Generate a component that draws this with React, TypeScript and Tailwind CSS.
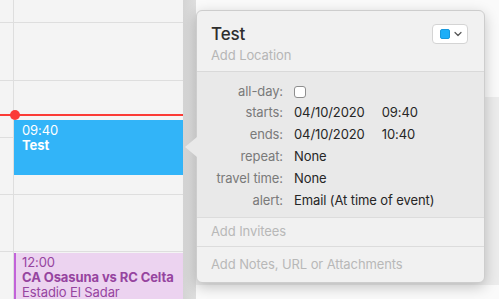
import React from 'react';

const font = { fontFamily: 'Inter, "Noto Sans", sans-serif' };

function DetailRow({ label, children, tall }: { label: string; children: React.ReactNode; tall?: boolean }) {
  return (
    <div className={`flex items-center ${tall ? 'h-[20px]' : 'h-[22px]'}`}>
      <div className="w-[86px] text-right text-[13px] text-[#7a7a7a] shrink-0">{label}</div>
      <div className="pl-[11px] text-[13px] text-[#262626] flex items-center">{children}</div>
    </div>
  );
}

function CalendarColumn() {
  return (
    <div className="relative w-[183px] h-full bg-[#f4f4f4] shrink-0">
      {/* hour grid */}
      <div className="flex flex-col">
        <div className="h-[22px]" />
        <div className="h-[58px] border-t border-[#dedede]" />
        <div className="h-[57px] border-t border-[#dedede]" />
        <div className="h-[57px] border-t border-[#dedede]" />
        <div className="h-[57px] border-t border-[#dedede]" />
        <div className="h-[48px] border-t border-[#dedede]" />
      </div>
      <div className="absolute left-[13px] top-0 bottom-0 w-px bg-[#dedede]" />

      {/* current time */}
      <div className="absolute left-0 right-0 top-[114px] h-[2px] bg-[#fb3b36]" />
      <div className="absolute left-[10px] top-[110px] w-[10px] h-[10px] rounded-full bg-[#fb3b36]" />

      {/* events */}
      <div className="absolute left-[14px] right-0 top-[120px] h-[55px] bg-[#32b4f8] pl-[8px] pt-[3px] text-white text-[13px] leading-[15px] tracking-[-0.1px]">
        <div>09:40</div>
        <div className="font-bold">Test</div>
      </div>
      <div className="absolute left-[14px] right-0 top-[253px] h-[60px] bg-[#ecd3f0] border-l-2 border-[#c262d9] pl-[6px] pt-[2px] text-[#96449f] text-[13px] leading-[15px] tracking-[-0.1px]">
        <div>12:00</div>
        <div className="font-bold">CA Osasuna vs RC Celta</div>
        <div>Estadio El Sadar</div>
      </div>
    </div>
  );
}

function EventPopover() {
  return (
    <div className="absolute left-0 top-[10px] w-[289px] h-[273px] rounded-[6px] border border-[#cdcdcd] bg-[#f1f1f1] shadow-[0_4px_14px_rgba(0,0,0,0.22)] flex flex-col tracking-[-0.1px]">
      {/* arrow */}
      <div className="absolute left-[-12px] top-[126px] w-0 h-0 border-y-[10px] border-y-transparent border-r-[12px] border-r-[#e9e9e9]" />

      <div className="relative h-[60px] px-[14px] pt-[12px] rounded-t-[6px]">
        <div className="text-[17px] font-medium text-[#2e2e2e] leading-[22px]">Test</div>
        <div className="text-[13px] text-[#b6b6b6] leading-[16px] mt-[2px]">Add Location</div>
        <div className="absolute left-[235px] top-[13px] w-[36px] h-[20px] rounded-[4px] bg-white border border-[#d4d4d4] flex items-center pl-[7px] gap-[4px]">
          <div className="w-[10px] h-[10px] rounded-[2px] bg-[#1caef8] border border-[#1799dd]" />
          <svg width="8" height="6" viewBox="0 0 8 6" fill="none">
            <path d="M1 1.5 L4 4.5 L7 1.5" stroke="#555" strokeWidth="1.2" strokeLinecap="round" strokeLinejoin="round" />
          </svg>
        </div>
      </div>

      <div className="h-[146px] border-t border-[#d9d9d9] bg-[#e9e9e9] pt-[10px]">
        <DetailRow label="all-day:" tall>
          <div className="w-[12px] h-[12px] rounded-[3px] border border-[#8e8e8e] bg-white" />
        </DetailRow>
        <DetailRow label="starts:">
          <span>04/10/2020</span>
          <span className="ml-[17px]">09:40</span>
        </DetailRow>
        <DetailRow label="ends:">
          <span>04/10/2020</span>
          <span className="ml-[17px]">10:40</span>
        </DetailRow>
        <DetailRow label="repeat:">None</DetailRow>
        <DetailRow label="travel time:">None</DetailRow>
        <DetailRow label="alert:">Email (At time of event)</DetailRow>
      </div>

      <div className="h-[29px] border-t border-[#dcdcdc] flex items-center px-[14px] text-[13px] text-[#b8b8b8]">
        Add Invitees
      </div>
      <div className="flex-1 border-t border-[#dcdcdc] flex items-center px-[14px] text-[13px] text-[#b8b8b8] rounded-b-[6px]">
        Add Notes, URL or Attachments
      </div>
    </div>
  );
}

export default function App() {
  return (
    <div className="w-[499px] h-[299px] flex overflow-hidden bg-[#fafafa]" style={font}>
      <CalendarColumn />
      <div className="w-[13px] h-full bg-gradient-to-r from-[#d4d4d4] to-[#dedede] shrink-0" />
      <div className="relative flex-1 h-full">
        <div className="absolute left-0 right-0 top-[97px] h-[188px] bg-[#ececec]" />
        <EventPopover />
      </div>
    </div>
  );
}
